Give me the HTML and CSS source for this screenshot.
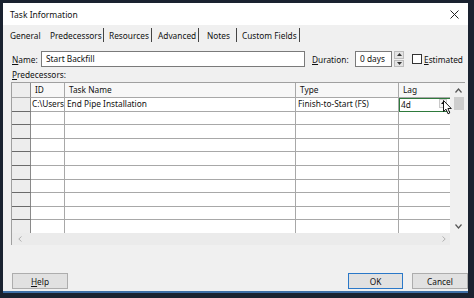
FILE: index.html
```html
<!DOCTYPE html>
<html>
<head>
<meta charset="utf-8">
<link rel="stylesheet" href="styles.css">
</head>
<body>
<div class="dialog">
  <div class="titlebar">
    <span class="title">Task Information</span>
    <svg class="close" width="9" height="9" viewBox="0 0 9 9"><path d="M0.5 0.5 L8.5 8.5 M8.5 0.5 L0.5 8.5" stroke="#222" stroke-width="1" fill="none"/></svg>
  </div>
  <div class="tabs">
    <span class="tab t-general">General</span>
    <span class="tab t-pred selected">Predecessors</span>
    <span class="tab t-res">Resources</span>
    <span class="tab t-adv">Advanced</span>
    <span class="tab t-notes">Notes</span>
    <span class="tab t-custom">Custom Fields</span>
  </div>
  <div class="page">
    <div class="name-row">
      <span class="lbl name-lbl"><u>N</u>ame:</span>
      <div class="field name-field">Start Backfill</div>
      <span class="lbl dur-lbl"><u>D</u>uration:</span>
      <div class="field dur-field">0 days</div>
      <div class="spin">
        <div class="spin-btn"><svg width="5" height="3" viewBox="0 0 5 3"><path d="M0 3 L2.5 0 L5 3Z" fill="#333"/></svg></div>
        <div class="spin-btn"><svg width="5" height="3" viewBox="0 0 5 3"><path d="M0 0 L2.5 3 L5 0Z" fill="#333"/></svg></div>
      </div>
      <div class="checkbox"></div>
      <span class="lbl est-lbl"><u>E</u>stimated</span>
    </div>
    <div class="pred-lbl"><u>P</u>redecessors:</div>
    <div class="grid-wrap">
      <div class="grid">
        <div class="c rh hd"></div>
        <div class="c hd">ID</div>
        <div class="c hd">Task Name</div>
        <div class="c hd">Type</div>
        <div class="c hd">Lag</div>

        <div class="c rh"></div>
        <div class="c id">C:\Users</div>
        <div class="c">End Pipe Installation</div>
        <div class="c">Finish-to-Start (FS)</div>
        <div class="c lag">4d</div>

        <div class="c rh"></div><div class="c"></div><div class="c"></div><div class="c"></div><div class="c"></div>
        <div class="c rh"></div><div class="c"></div><div class="c"></div><div class="c"></div><div class="c"></div>
        <div class="c rh"></div><div class="c"></div><div class="c"></div><div class="c"></div><div class="c"></div>
        <div class="c rh"></div><div class="c"></div><div class="c"></div><div class="c"></div><div class="c"></div>
        <div class="c rh"></div><div class="c"></div><div class="c"></div><div class="c"></div><div class="c"></div>
        <div class="c rh"></div><div class="c"></div><div class="c"></div><div class="c"></div><div class="c"></div>
        <div class="c rh"></div><div class="c"></div><div class="c"></div><div class="c"></div><div class="c"></div>
        <div class="c rh"></div><div class="c"></div><div class="c"></div><div class="c"></div><div class="c"></div>
        <div class="c rh"></div><div class="c"></div><div class="c"></div><div class="c"></div><div class="c"></div>
      </div>
      <div class="vscroll">
        <svg width="7" height="5" viewBox="0 0 7 5"><path d="M0.5 4.5 L3.5 1 L6.5 4.5" stroke="#555" stroke-width="1.2" fill="none"/></svg>
        <div class="thumb"></div>
        <div class="vspace"></div>
        <svg width="7" height="5" viewBox="0 0 7 5"><path d="M0.5 0.5 L3.5 4 L6.5 0.5" stroke="#555" stroke-width="1.2" fill="none"/></svg>
      </div>
      <div class="hscroll">
        <svg width="4" height="6" viewBox="0 0 4 6"><path d="M3.5 0.5 L0.8 3 L3.5 5.5" stroke="#aaa" stroke-width="0.9" fill="none"/></svg>
        <svg width="4" height="6" viewBox="0 0 4 6"><path d="M0.5 0.5 L3.2 3 L0.5 5.5" stroke="#aaa" stroke-width="0.9" fill="none"/></svg>
      </div>
      <div class="corner"></div>
      <div class="lag-spin"><svg width="5" height="3" viewBox="0 0 5 3"><path d="M0 3 L2.5 0 L5 3Z" fill="#111"/></svg></div>
      <svg class="cursor" width="10" height="15" viewBox="0 0 10 15"><path d="M0.5 0.5 L0.5 11.5 L3 9.2 L5 13.8 L6.8 13 L4.9 8.5 L8.3 8.5 Z" fill="#fff" stroke="#000" stroke-width="0.9" stroke-linejoin="round"/></svg>
    </div>
  </div>
  <div class="buttons">
    <div class="btn"><u>H</u>elp</div>
    <div class="spacer"></div>
    <div class="btn ok">OK</div>
    <div class="btn cancel">Cancel</div>
  </div>
</div>
</body>
</html>
```
FILE: styles.css
```css
html, body {
  margin: 0;
  padding: 0;
  width: 474px;
  height: 298px;
  overflow: hidden;
  background: #1a2230;
}
body {
  padding: 3px 0 0 3px;
  box-sizing: border-box;
}
.dialog {
  width: 465px;
  height: 290px;
  box-sizing: border-box;
  background: #f0f0f0;
  border-bottom: 2px solid #3f6fa6;
  display: flex;
  flex-direction: column;
  font-family: "Noto Sans", "DejaVu Sans", sans-serif;
  font-size: 8.3px;
  color: #111;
}
u { text-decoration: underline; text-underline-offset: 1px; }
.titlebar {
  height: 22px;
  background: #fff;
  display: flex;
  align-items: center;
  justify-content: space-between;
  padding: 0 9px 0 7px;
  flex: none;
}
.title { font-size: 8.5px; }
.tabs {
  height: 19px;
  display: flex;
  align-items: center;
  padding-left: 4px;
  flex: none;
}
.tab {
  height: 14px;
  line-height: 15px;
  box-sizing: border-box;
  white-space: nowrap;
  border-right: 1px solid #444;
}
.t-general { width: 37px; padding-left: 3px; border-right: none; }
.t-pred { width: 60px; padding-left: 6px; }
.t-res { width: 48px; padding-left: 5px; }
.t-adv { width: 47px; padding-left: 6px; }
.t-notes { width: 38px; padding-left: 8px; }
.t-custom { width: 63px; padding-left: 5px; }
.page {
  padding: 7px 0 0 8px;
  display: flex;
  flex-direction: column;
  flex: none;
}
.name-row {
  height: 16px;
  display: flex;
  align-items: center;
}
.lbl { white-space: nowrap; }
.name-lbl { width: 30px; padding-left: 1px; box-sizing: border-box; }
.field {
  height: 16px;
  box-sizing: border-box;
  border: 1px solid #7a7a7a;
  background: #fff;
  line-height: 14px;
  padding-left: 4px;
  white-space: nowrap;
}
.name-field { width: 264px; }
.dur-lbl { width: 43px; padding-left: 7px; box-sizing: content-box; }
.dur-field { width: 37px; }
.spin {
  margin-left: 2px;
  width: 10px;
  height: 16px;
  display: flex;
  flex-direction: column;
  gap: 1px;
}
.spin-btn {
  flex: 1;
  background: #e4e4e4;
  border: 1px solid #bcbcbc;
  display: flex;
  align-items: center;
  justify-content: center;
}
.checkbox {
  margin-left: 8px;
  width: 10px;
  height: 10px;
  box-sizing: border-box;
  border: 1px solid #333;
  background: #fff;
}
.est-lbl { margin-left: 2px; }
.pred-lbl {
  margin-top: 2px;
  height: 12px;
  line-height: 12px;
  padding-left: 1px;
}
.grid-wrap {
  margin-top: 1px;
  width: 454px;
  height: 163px;
  display: grid;
  grid-template-columns: 439px 15px;
  grid-template-rows: 151px 12px;
  position: relative;
}
.grid {
  display: grid;
  grid-template-columns: 19px 34px 231px 103px 52px;
  grid-template-rows: 15px repeat(10, 13.6px);
  border-top: 1px solid #a0a0a0;
  border-left: 1px solid #a0a0a0;
  box-sizing: border-box;
  background: #fff;
  overflow: hidden;
}
.c {
  border-right: 1px solid #a8a8a8;
  border-bottom: 1px solid #a8a8a8;
  box-sizing: border-box;
  white-space: nowrap;
  overflow: hidden;
  padding-left: 2px;
  line-height: 12px;
  background: #fff;
}
.c.id { padding-left: 1px; letter-spacing: -0.1px; }
.c.hd { background: #f7f7f7; line-height: 14px; padding-left: 4px; }
.c.rh {
  background: #ededed;
  border-bottom: 1px solid #6a6a6a;
  border-right: 1px solid #8a8a8a;
}
.c.rh.hd { border-bottom-color: #a8a8a8; }
.c.lag {
  border: 1px solid #2f7a3d;
  padding-left: 1px;
}
.vscroll {
  background: #f0f0f0;
  border-top: 1px solid #a0a0a0;
  display: flex;
  flex-direction: column;
  align-items: center;
  padding: 5px 0 4px 2px;
  box-sizing: border-box;
}
.thumb {
  margin-top: 4px;
  width: 10px;
  height: 13px;
  background: #cdcdcd;
}
.vspace { flex: 1; }
.hscroll {
  background: #ebebeb;
  border-left: 1px solid #a0a0a0;
  display: flex;
  align-items: center;
  justify-content: space-between;
  padding: 0 4px 0 6px;
}
.corner { background: #f0f0f0; }
.lag-spin {
  position: absolute;
  left: 428px;
  top: 17px;
  width: 8px;
  height: 9px;
  box-sizing: border-box;
  border: 1px solid #c8c8c8;
  background: #f4f4f4;
  display: flex;
  align-items: flex-start;
  justify-content: center;
  padding-top: 1px;
}
.cursor {
  position: absolute;
  left: 432px;
  top: 18px;
}
.buttons {
  margin-top: 28px;
  height: 16px;
  display: flex;
  padding: 0 0 0 9px;
  flex: none;
}
.spacer { flex: 1; }
.btn {
  width: 56px;
  height: 16px;
  box-sizing: border-box;
  background: #e1e1e1;
  border: 1px solid #adadad;
  display: flex;
  align-items: center;
  justify-content: center;
}
.btn.ok { width: 55px; border-color: #2a78c8; }
.btn.cancel { margin-left: 9px; }
```
